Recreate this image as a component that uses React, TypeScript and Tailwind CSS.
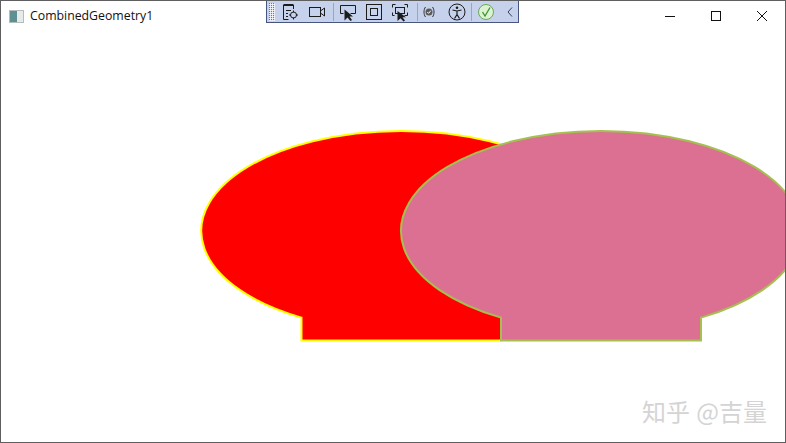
const ToolIcon = ({ width, children }: { width: number; children: React.ReactNode }) => (
  <svg width={width} height={20} viewBox={`0 0 ${width} 20`} fill="none" stroke="#1b1b1b" strokeWidth="1" className="flex-shrink-0">
    {children}
  </svg>
);

const Separator = () => <div className="w-px h-[18px] bg-[#9aa5c4] flex-shrink-0" />;

const Gripper = () => (
  <svg width="6" height="18" viewBox="0 0 6 18" className="flex-shrink-0 ml-[2px] mr-[6px]">
    <defs>
      <pattern id="grip" width="2" height="2" patternUnits="userSpaceOnUse">
        <rect width="2" height="2" fill="#dfe5f5" />
        <rect width="1" height="1" fill="#6c7696" />
        <rect x="1" y="1" width="1" height="1" fill="#f4f6fc" />
      </pattern>
    </defs>
    <rect width="6" height="18" fill="url(#grip)" />
  </svg>
);

const Toolbar = () => (
  <div className="absolute left-[265px] top-0 w-[253px] h-[22px] bg-[#c6d1ec] border border-t-0 border-[#47557f] flex items-center">
    <Gripper />

    <ToolIcon width={18}>
      <path d="M2.500 3.500h10M2.500 2.500h10" stroke="#1b1b1b" />
      <path d="M2.500 3v14.500h5M5 8.500h5M5 11.500h2M5 14.500h2M12.500 3v4" />
      <circle cx="12.500" cy="13" r="3" />
      <path d="M12.500 8.500v2M12.500 15.500v2M8 13h2M15 13h2" />
    </ToolIcon>
    <div className="w-[9px] flex-shrink-0" />
    <ToolIcon width={18}>
      <rect x="1.500" y="5.500" width="11" height="9" />
      <path d="M12.500 9l4-3v8l-4-3" />
    </ToolIcon>
    <div className="w-[7px] flex-shrink-0" />
    <Separator />
    <div className="w-[5px] flex-shrink-0" />
    <ToolIcon width={18}>
      <path d="M4.500 11.500h-3v-8h15v8h-5" />
      <path d="M5.500 7.500v11l3-3 3 3.500 1.500-1-2.500-3.500h3.500z" fill="#1b1b1b" stroke="none" />
    </ToolIcon>
    <div className="w-[8px] flex-shrink-0" />
    <ToolIcon width={18}>
      <rect x="1.500" y="2.500" width="15" height="15" />
      <rect x="5.500" y="6.500" width="7" height="7" />
    </ToolIcon>
    <div className="w-[8px] flex-shrink-0" />
    <ToolIcon width={18}>
      <path d="M1.500 5.500v-3h3M13.500 2.500h3v3M1.500 10.500v3h2M16.500 10.500v3h-3" />
      <rect x="4.500" y="5.500" width="9" height="6" />
      <path d="M6.500 9v10l3-2.800 3 3.300 1.500-1-2.500-3.300h3.500z" fill="#1b1b1b" stroke="none" />
    </ToolIcon>
    <div className="w-[8px] flex-shrink-0" />
    <Separator />
    <div className="w-[3px] flex-shrink-0" />
    <ToolIcon width={16}>
      <path d="M4.500 5c-2 2.500-2 7.500 0 10M11.500 5c2 2.500 2 7.500 0 10" strokeWidth="1" stroke="#333333" />
      <circle cx="8" cy="10" r="3.500" fill="#5a5a5a" stroke="none" />
      <path d="M6.300 10l1.300 1.300 2.200-2.600" stroke="#ffffff" />
    </ToolIcon>
    <div className="w-[11px] flex-shrink-0" />
    <ToolIcon width={18}>
      <circle cx="9" cy="10" r="8" />
      <circle cx="9" cy="5.800" r="1.300" fill="#1b1b1b" stroke="none" />
      <path d="M4.500 8l4.500 1 4.500-1M9 9v3.500M9 12.500l-2.500 4M9 12.500l2.500 4" strokeWidth="1.200" />
    </ToolIcon>
    <div className="w-[5px] flex-shrink-0" />
    <Separator />
    <div className="w-[5px] flex-shrink-0" />
    <ToolIcon width={18}>
      <circle cx="9" cy="10" r="7.500" fill="#dcf3d0" stroke="#6aa85a" />
      <path d="M5.500 10l2.500 4 5-8.500" stroke="#3e8f3a" strokeWidth="1.300" />
    </ToolIcon>
    <div className="w-[11px] flex-shrink-0" />
    <ToolIcon width={8}>
      <path d="M6 5.500l-4 4.500 4 4.500" stroke="#3a3f55" />
    </ToolIcon>
  </div>
);

const Geometry = () => (
  <svg width={785} height={411} viewBox="1 31 785 411" className="block">
    <path
      d="M301.500 317.600 A200 100 0 1 1 501 317.600 L501 340.500 L301.500 340.500 Z"
      fill="#ff0000"
      stroke="#ffff00"
      strokeWidth="2"
    />
    <path
      d="M501 317.600 A200 100 0 1 1 701 317.600 L701 340.500 L501 340.500 Z"
      fill="#db7093"
      stroke="#a5c050"
      strokeWidth="2"
    />
  </svg>
);

const App = () => (
  <div className="w-[786px] h-[443px] bg-white border border-[#5f5f5f] relative overflow-hidden font-['Open_Sans','Liberation_Sans',sans-serif]">
    {/* Title bar */}
    <div className="h-[30px] flex items-center text-[#111111]">
      <div className="w-[15px] h-[13px] ml-[8px] mr-[6px] border border-[#b4bcbc] bg-[#e6eaea] flex flex-shrink-0">
        <div className="w-[7px] bg-[#5f8f90]" />
      </div>
      <span className="text-[12.3px]">CombinedGeometry1</span>
      <div className="ml-auto flex items-center">
        <div className="w-[46px] h-[30px] flex items-center justify-center">
          <div className="w-[10px] h-px bg-[#111111]" />
        </div>
        <div className="w-[46px] h-[30px] flex items-center justify-center">
          <div className="w-[10px] h-[10px] border border-[#111111]" />
        </div>
        <div className="w-[46px] h-[30px] flex items-center justify-center">
          <svg width="10" height="10" viewBox="0 0 10 10" stroke="#111111" strokeWidth="1">
            <path d="M0 0l10 10M10 0L0 10" />
          </svg>
        </div>
      </div>
    </div>

    <Geometry />
    <Toolbar />

    {/* Watermark */}
    <div className="absolute right-[18px] bottom-[19px] text-[24px] leading-none [word-spacing:1px] text-[#d4d4d4] font-['Noto_Sans_CJK_SC',sans-serif]">
      知乎 @吉量
    </div>
  </div>
);

export default App;
